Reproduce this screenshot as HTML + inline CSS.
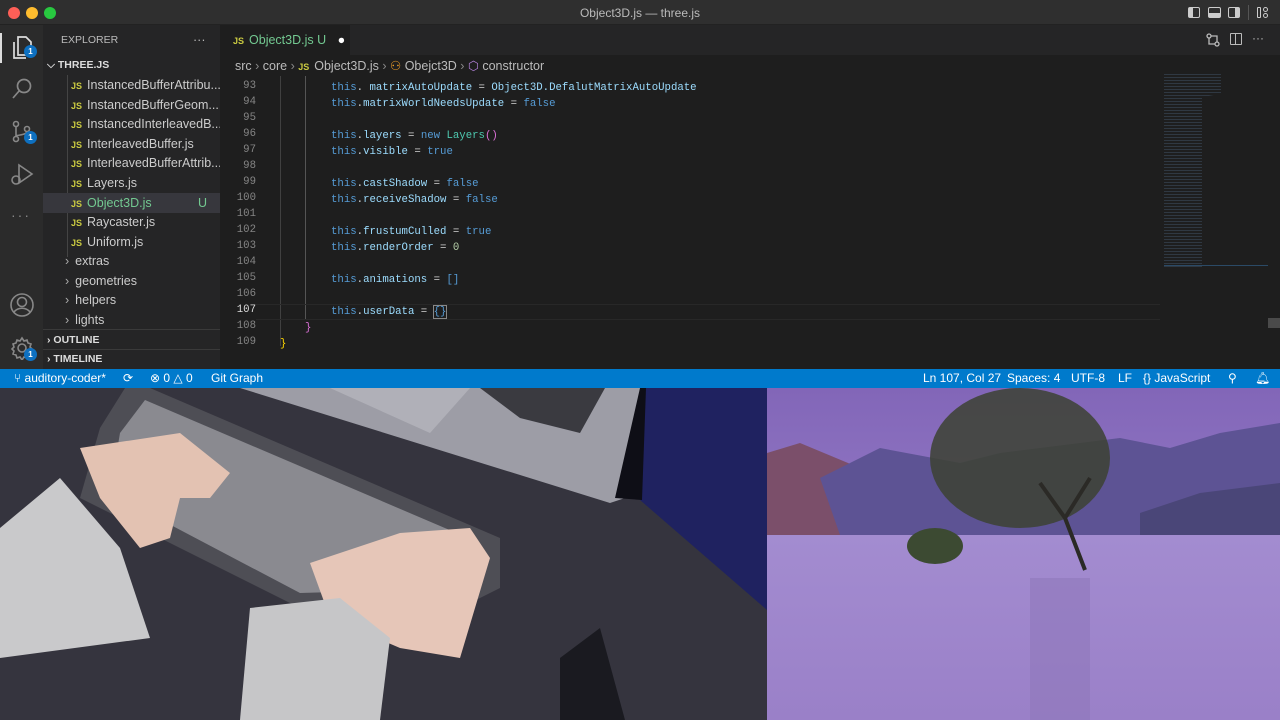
<!DOCTYPE html>
<html><head><meta charset="utf-8"><style>
*{margin:0;padding:0;box-sizing:border-box}
body{width:1280px;height:720px;overflow:hidden;background:#1e1e1e;font-family:"Liberation Sans",sans-serif;position:relative;color:#ccc}
.abs{position:absolute}
#title{left:0;top:0;width:1280px;height:25px;background:#2f2f2f;border-bottom:1px solid #222}
.dot{position:absolute;top:7px;width:12px;height:12px;border-radius:50%}
#act{left:0;top:25px;width:43px;height:344px;background:#2b2b2b}
#side{left:43px;top:25px;width:177px;height:344px;background:#252526;font-size:12.5px}
.row{position:absolute;left:0;width:177px;height:20px;line-height:20px;white-space:nowrap}
.js{color:#cbcb41;font-size:9px;font-weight:bold;margin-right:5px}
#ed{left:220px;top:25px;width:1060px;height:344px;background:#1e1e1e}
#tabs{left:220px;top:25px;width:1060px;height:30px;background:#252526}
.code{position:absolute;font-family:"Liberation Mono",monospace;font-size:10.7px;white-space:pre;line-height:16px}
.ln{position:absolute;left:220px;width:36px;text-align:right;font-family:"Liberation Mono",monospace;font-size:10.7px;color:#858585}
.t{color:#569cd6}.p{color:#9cdcfe}.k{color:#569cd6}.c{color:#4ec9b0}.n{color:#b5cea8}.w{color:#d4d4d4}
#status{left:0;top:369px;width:1280px;height:19px;background:#007acc;color:#fff;font-size:12px;line-height:19px}
.badge{position:absolute;width:13px;height:13px;border-radius:50%;background:#0e70c0;color:#fff;font-size:8px;text-align:center;line-height:13px;font-weight:bold}
</style></head><body>
<div id="title" class="abs">
<div class="dot" style="left:8px;background:#fe5f57"></div>
<div class="dot" style="left:26px;background:#febc2e"></div>
<div class="dot" style="left:44px;background:#28c840"></div>
<div style="position:absolute;left:0;width:1280px;text-align:center;top:6px;font-size:12px;color:#bbb">Object3D.js — three.js</div>
<div style="position:absolute;left:1188px;top:7px;width:12px;height:11px;border:1.5px solid #ccc;border-left-width:5px;border-radius:2px"></div>
<div style="position:absolute;left:1208px;top:7px;width:13px;height:11px;border:1.5px solid #ccc;border-bottom-width:5px;border-radius:2px"></div>
<div style="position:absolute;left:1228px;top:7px;width:12px;height:11px;border:1.5px solid #ccc;border-right-width:5px;border-radius:2px"></div>
<div style="position:absolute;left:1248px;top:5px;width:1px;height:15px;background:#555"></div>
<div style="position:absolute;left:1257px;top:7px;width:4px;height:11px;border:1.3px solid #ccc;border-radius:1px"></div>
<div style="position:absolute;left:1263px;top:7px;width:5px;height:5px;border:1.3px solid #ccc;border-radius:50%"></div>
<div style="position:absolute;left:1263px;top:13px;width:5px;height:5px;border:1.3px solid #ccc;border-radius:50%"></div>
</div>
<div id="act" class="abs">
<div style="position:absolute;left:0;top:8px;width:2px;height:30px;background:#ddd"></div>
<svg class="abs" style="left:10px;top:9px" width="24" height="28" viewBox="0 0 24 28" fill="none" stroke="#ddd" stroke-width="1.7"><path d="M8 3h8l5 5v13H8z M4 8v16h12"/></svg>
<div class="badge" style="left:24px;top:20px">1</div>
<svg class="abs" style="left:10px;top:52px" width="24" height="24" fill="none" stroke="#888" stroke-width="1.7"><circle cx="14" cy="9" r="6.5"/><path d="M9.5 13.5L3 21"/></svg>
<svg class="abs" style="left:10px;top:95px" width="24" height="24" fill="none" stroke="#888" stroke-width="1.6"><circle cx="6" cy="4" r="2.5"/><circle cx="6" cy="19" r="2.5"/><circle cx="17" cy="9" r="2.5"/><path d="M6 6.5v10M17 11.5c0 4-11 3-11 5"/></svg>
<div class="badge" style="left:24px;top:106px">1</div>
<svg class="abs" style="left:9px;top:137px" width="26" height="26" fill="none" stroke="#888" stroke-width="1.6"><path d="M10 3l13 9-13 9z"/><circle cx="7" cy="18" r="4"/></svg>
<div class="abs" style="left:11px;top:182px;color:#888;font-size:14px;letter-spacing:2px">···</div>
<svg class="abs" style="left:9px;top:267px" width="26" height="26" fill="none" stroke="#888" stroke-width="1.6"><circle cx="13" cy="13" r="11"/><circle cx="13" cy="10" r="4.5"/><path d="M5 20c4-5 12-5 16 0"/></svg>
<svg class="abs" style="left:10px;top:311px" width="24" height="24" fill="none" stroke="#888" stroke-width="1.6"><circle cx="12" cy="12" r="4"/><path d="M12 2l2 3 3-1 1 3 3 1-1 3 2 2-2 2 1 3-3 1-1 3-3-1-2 3-2-3-3 1-1-3-3-1 1-3-2-2 2-2-1-3 3-1 1-3 3 1z"/></svg>
<div class="badge" style="left:24px;top:323px">1</div>
</div>
<div id="side" class="abs">
<div class="row" style="top:5px;left:18px;font-size:10.5px;color:#bbb">EXPLORER</div>
<div class="row" style="top:5px;left:150px;width:20px;color:#bbb">···</div>
<div class="row" style="top:30px;left:4px;font-size:10.5px;font-weight:bold;color:#ddd">⌵ THREE.JS</div>
<div style="position:absolute;left:24px;top:50px;width:1px;height:182px;background:#444"></div>
<div class="row" style="top:50px;left:28px;color:#ccc"><span class="js">JS</span>InstancedBufferAttribu...</div>
<div class="row" style="top:70px;left:28px;color:#ccc"><span class="js">JS</span>InstancedBufferGeom...</div>
<div class="row" style="top:89px;left:28px;color:#ccc"><span class="js">JS</span>InstancedInterleavedB...</div>
<div class="row" style="top:109px;left:28px;color:#ccc"><span class="js">JS</span>InterleavedBuffer.js</div>
<div class="row" style="top:128px;left:28px;color:#ccc"><span class="js">JS</span>InterleavedBufferAttrib...</div>
<div class="row" style="top:148px;left:28px;color:#ccc"><span class="js">JS</span>Layers.js</div>
<div class="row" style="top:168px;left:0;background:#37373d"></div>
<div class="row" style="top:168px;left:28px;color:#73c991"><span class="js">JS</span>Object3D.js<span style="position:absolute;left:127px">U</span></div>
<div class="row" style="top:187px;left:28px;color:#ccc"><span class="js">JS</span>Raycaster.js</div>
<div class="row" style="top:207px;left:28px;color:#ccc"><span class="js">JS</span>Uniform.js</div>
<div class="row" style="top:226px;left:22px;color:#ccc"><span style="color:#aaa;margin-right:6px">›</span>extras</div>
<div class="row" style="top:246px;left:22px;color:#ccc"><span style="color:#aaa;margin-right:6px">›</span>geometries</div>
<div class="row" style="top:265px;left:22px;color:#ccc"><span style="color:#aaa;margin-right:6px">›</span>helpers</div>
<div class="row" style="top:285px;left:22px;color:#ccc"><span style="color:#aaa;margin-right:6px">›</span>lights</div>
<div style="position:absolute;left:0;top:304px;width:177px;height:1px;background:#3a3a3a"></div>
<div class="row" style="top:305px;left:4px;font-size:10.5px;font-weight:bold;color:#ddd">› OUTLINE</div>
<div style="position:absolute;left:0;top:324px;width:177px;height:1px;background:#3a3a3a"></div>
<div class="row" style="top:324px;left:4px;font-size:10.5px;font-weight:bold;color:#ddd">› TIMELINE</div>
</div>
<div id="ed" class="abs"></div>
<div id="tabs" class="abs">
<div style="position:absolute;left:0;top:0;width:130px;height:30px;background:#1e1e1e;font-size:12.5px;line-height:30px;padding-left:13px;color:#73c991"><span class="js">JS</span>Object3D.js U <span style="color:#fff;margin-left:8px">●</span></div>
<svg class="abs" style="left:986px;top:8px" width="14" height="14" fill="none" stroke="#bbb" stroke-width="1.3"><circle cx="3" cy="3" r="2"/><circle cx="11" cy="11" r="2"/><path d="M3 5v6h6M11 9V3H5"/></svg>
<div class="abs" style="left:1010px;top:8px;width:12px;height:12px;border:1.3px solid #bbb;border-radius:1px"><div style="position:absolute;left:4px;top:0;width:1px;height:10px;background:#bbb"></div></div>
<div class="abs" style="left:1032px;top:6px;color:#bbb;font-size:12px">···</div>
</div>
<div class="abs" style="left:235px;top:58px;font-size:12.5px;color:#bbb;white-space:nowrap">src <span style="color:#888">›</span> core <span style="color:#888">›</span> <span class="js">JS</span>Object3D.js <span style="color:#888">›</span> <span style="color:#ee9d28">⚇</span> Obejct3D <span style="color:#888">›</span> <span style="color:#b180d7">⬡</span> constructor</div>
<div class="abs" style="left:280px;top:76px;width:1px;height:270px;background:#404040"></div>
<div class="abs" style="left:305px;top:76px;width:1px;height:244px;background:#555"></div>
<div class="abs" style="left:256px;top:304px;width:904px;height:16px;border-top:1px solid #282828;border-bottom:1px solid #282828"></div>
<div class="ln" style="top:80px">93</div><div class="ln" style="top:96px">94</div><div class="ln" style="top:112px">95</div><div class="ln" style="top:128px">96</div><div class="ln" style="top:144px">97</div><div class="ln" style="top:160px">98</div><div class="ln" style="top:176px">99</div><div class="ln" style="top:192px">100</div><div class="ln" style="top:208px">101</div><div class="ln" style="top:224px">102</div><div class="ln" style="top:240px">103</div><div class="ln" style="top:256px">104</div><div class="ln" style="top:272px">105</div><div class="ln" style="top:288px">106</div><div class="ln" style="top:304px;color:#ddd">107</div><div class="ln" style="top:320px">108</div><div class="ln" style="top:336px">109</div>
<div class="code" style="left:331px;top:80px"><span class="t">this</span><span class="w">. </span><span class="p">matrixAutoUpdate</span><span class="w"> = </span><span class="p">Object3D.DefalutMatrixAutoUpdate</span>
<span class="t">this</span><span class="w">.</span><span class="p">matrixWorldNeedsUpdate</span><span class="w"> = </span><span class="k">false</span>

<span class="t">this</span><span class="w">.</span><span class="p">layers</span><span class="w"> = </span><span class="k">new</span> <span class="c">Layers</span><span class="w" style="color:#da70d6">()</span>
<span class="t">this</span><span class="w">.</span><span class="p">visible</span><span class="w"> = </span><span class="k">true</span>

<span class="t">this</span><span class="w">.</span><span class="p">castShadow</span><span class="w"> = </span><span class="k">false</span>
<span class="t">this</span><span class="w">.</span><span class="p">receiveShadow</span><span class="w"> = </span><span class="k">false</span>

<span class="t">this</span><span class="w">.</span><span class="p">frustumCulled</span><span class="w"> = </span><span class="k">true</span>
<span class="t">this</span><span class="w">.</span><span class="p">renderOrder</span><span class="w"> = </span><span class="n">0</span>

<span class="t">this</span><span class="w">.</span><span class="p">animations</span><span class="w"> = </span><span class="k">[]</span>

<span class="t">this</span><span class="w">.</span><span class="p">userData</span><span class="w"> = </span><span class="k" style="outline:1px solid #888">{}</span></div>
<div class="code" style="left:305px;top:320px;color:#da70d6">}</div>
<div class="code" style="left:280px;top:336px;color:#ffd700">}</div>
<div class="abs" style="left:1164px;top:74px;width:95px;height:195px;background:repeating-linear-gradient(180deg,#3a4a5a 0 1px,transparent 1px 3px);opacity:.6;clip-path:polygon(0 0,60% 0,60% 10%,40% 12%,40% 100%,0 100%)"></div>
<div class="abs" style="left:1164px;top:265px;width:104px;height:1px;background:#2b4a66"></div>
<div class="abs" style="left:1268px;top:318px;width:12px;height:10px;background:#4a4a4a"></div>
<div id="status" class="abs">
<span class="abs" style="left:14px">⑂ auditory-coder*</span>
<span class="abs" style="left:123px">⟳</span>
<span class="abs" style="left:150px">⊗ 0 △ 0</span>
<span class="abs" style="left:211px">Git Graph</span>
<span class="abs" style="left:923px">Ln 107, Col 27</span>
<span class="abs" style="left:1007px">Spaces: 4</span>
<span class="abs" style="left:1071px">UTF-8</span>
<span class="abs" style="left:1118px">LF</span>
<span class="abs" style="left:1143px">{} JavaScript</span>
<span class="abs" style="left:1228px">⚲</span>
<span class="abs" style="left:1255px">🔔︎</span>
</div>
<svg class="abs" style="left:0;top:388px" width="1280" height="332" viewBox="0 0 1280 332">
<defs>
<linearGradient id="sky" x1="0" y1="0" x2="0" y2="1"><stop offset="0" stop-color="#8266b8"/><stop offset="1" stop-color="#a58ed4"/></linearGradient>
<linearGradient id="lake" x1="0" y1="0" x2="0" y2="1"><stop offset="0" stop-color="#a38cd0"/><stop offset="1" stop-color="#9a80c8"/></linearGradient>
</defs>
<rect x="0" y="0" width="767" height="332" fill="#35343e"/>
<polygon points="600,0 767,0 767,222 640,112" fill="#1f2260"/>
<polygon points="240,0 645,0 640,105 610,115" fill="#9d9da6"/>
<polygon points="330,0 470,0 430,45" fill="#b0b0b8"/>
<polygon points="480,0 605,0 580,45 520,30" fill="#3a3a40"/>
<polygon points="615,110 640,0 646,0 642,112" fill="#0e0e16"/>
<polygon points="125,0 150,0 500,150 500,200 470,215 300,220 80,110 100,40" fill="#4e4e55"/>
<polygon points="145,12 480,155 470,200 300,205 110,105 120,45" fill="#8a8a90"/>
<polygon points="0,140 60,90 120,160 150,250 0,270" fill="#c9c9cb"/>
<polygon points="80,60 180,45 230,85 210,110 180,110 170,150 140,160 100,110" fill="#e3c2b2"/>
<polygon points="310,175 400,145 470,140 490,170 460,270 400,260 330,230" fill="#e6c6b8"/>
<polygon points="250,220 340,210 390,250 380,332 240,332" fill="#c6c6c8"/>
<polygon points="560,270 600,240 625,332 560,332" fill="#1a1a20"/>
<rect x="767" y="0" width="513" height="332" fill="url(#sky)"/>
<polygon points="767,65 800,55 860,80 900,100 930,147 767,147" fill="#7b4f6a"/>
<polygon points="820,90 880,60 960,75 1000,65 1120,50 1170,60 1220,45 1280,35 1280,147 840,147" fill="#5d5394"/>
<polygon points="1140,125 1200,105 1280,95 1280,150 1140,150" fill="#4a4678"/>
<rect x="767" y="147" width="513" height="185" fill="url(#lake)"/>
<rect x="1030" y="190" width="60" height="142" fill="#8f78ba" opacity=".6"/>
<ellipse cx="1020" cy="70" rx="90" ry="70" fill="#3c4232" opacity=".85"/>
<path d="M1085 182 L1065 130 L1040 95 M1065 130 L1090 90" stroke="#2b2a26" stroke-width="4" fill="none"/>
<ellipse cx="935" cy="158" rx="28" ry="18" fill="#3c4a32"/>
</svg>
</body></html>
